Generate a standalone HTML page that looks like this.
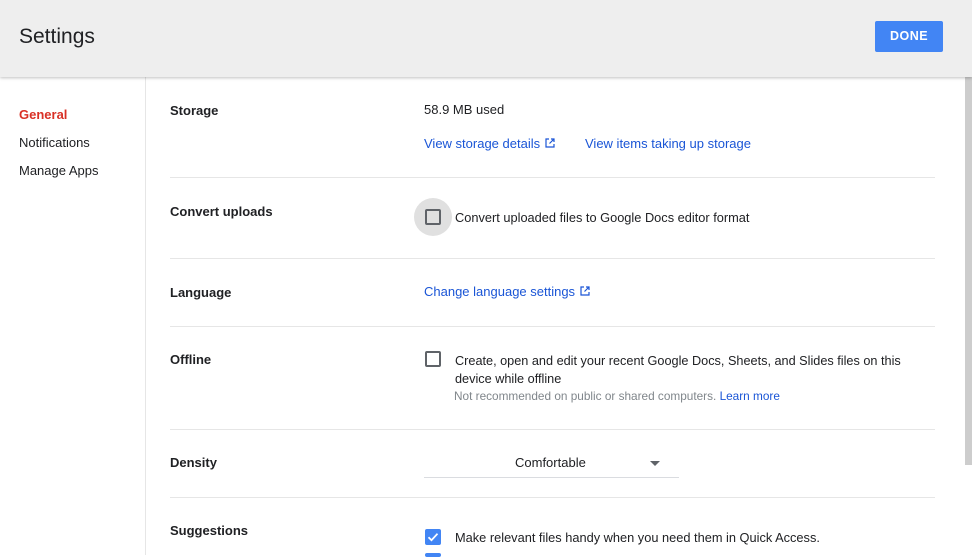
<!DOCTYPE html>
<html><head><style>
*{margin:0;padding:0;box-sizing:border-box}
body{width:972px;height:555px;overflow:hidden;background:#fff;font-family:"Liberation Sans",Arial,sans-serif;color:#202124;position:relative}
.a{position:absolute;white-space:nowrap}
.hdr{position:absolute;left:0;top:0;width:972px;height:77px;background:#eeeeee;box-shadow:0 1px 3px rgba(0,0,0,.25);z-index:2}
.lbl{font-size:13px;font-weight:bold;color:#202124}
.t{font-size:13px;color:#202124}
.lnk{font-size:13px;color:#1a55d6}
.hr{position:absolute;left:170px;width:765px;height:1px;background:#e6e6e6}
.cb{position:absolute;width:16px;height:16px;border:2px solid #5f6368;border-radius:2px}
.ext{display:inline-block;width:10px;height:10px;margin-left:5px;vertical-align:0}
</style></head><body>
<div class="hdr">
<div class="a" style="left:19px;top:25px;font-size:21px;color:#202124">Settings</div>
<div class="a" style="left:875px;top:21px;width:68px;height:31px;background:#4285f4;border-radius:2px;color:#fff;font-size:12.5px;font-weight:bold;text-align:center;line-height:31px;letter-spacing:.5px">DONE</div>
</div>
<div class="a" style="left:145px;top:77px;width:1px;height:478px;background:#e6e6e6"></div>
<div class="a" style="left:965px;top:73px;width:7px;height:392px;background:#cdcdcd"></div>
<div class="a" style="left:19px;top:107px;font-size:13px;font-weight:bold;color:#d93025">General</div>
<div class="a t" style="left:19px;top:135px">Notifications</div>
<div class="a t" style="left:19px;top:163px">Manage Apps</div>

<div class="a lbl" style="left:170px;top:103px">Storage</div>
<div class="a t" style="left:424px;top:102px">58.9 MB used</div>
<div class="a lnk" style="left:424px;top:136px">View storage details<svg class="ext" viewBox="0 0 10 10"><path d="M4 1H1v8h8V6M6 1h3v3M9 1L4.5 5.5" fill="none" stroke="#1a55d6" stroke-width="1.2"/></svg></div>
<div class="a lnk" style="left:585px;top:136px">View items taking up storage</div>
<div class="hr" style="top:177px"></div>

<div class="a lbl" style="left:170px;top:204px">Convert uploads</div>
<div class="a" style="left:414px;top:198px;width:38px;height:38px;border-radius:50%;background:#e0e0e0"></div>
<div class="cb" style="left:425px;top:209px"></div>
<div class="a t" style="left:455px;top:210px;font-size:12.8px">Convert uploaded files to Google Docs editor format</div>
<div class="hr" style="top:258px"></div>

<div class="a lbl" style="left:170px;top:285px">Language</div>
<div class="a lnk" style="left:424px;top:284px">Change language settings<svg class="ext" viewBox="0 0 10 10"><path d="M4 1H1v8h8V6M6 1h3v3M9 1L4.5 5.5" fill="none" stroke="#1a55d6" stroke-width="1.2"/></svg></div>
<div class="hr" style="top:326px"></div>

<div class="a lbl" style="left:170px;top:352px">Offline</div>
<div class="cb" style="left:425px;top:351px"></div>
<div class="a t" style="left:455px;top:352px;line-height:18px;font-size:12.7px">Create, open and edit your recent Google Docs, Sheets, and Slides files on this<br>device while offline</div>
<div class="a" style="left:454px;top:389px;font-size:11.8px;color:#80868b">Not recommended on public or shared computers. <span style="color:#1a55d6">Learn more</span></div>
<div class="hr" style="top:429px"></div>

<div class="a lbl" style="left:170px;top:455px">Density</div>
<div class="a t" style="left:515px;top:455px">Comfortable</div>
<div class="a" style="left:650px;top:461px;width:0;height:0;border-left:5px solid transparent;border-right:5px solid transparent;border-top:5px solid #5f6368"></div>
<div class="a" style="left:424px;top:477px;width:255px;height:1px;background:#dadce0"></div>
<div class="hr" style="top:497px"></div>

<div class="a lbl" style="left:170px;top:523px">Suggestions</div>
<div class="a" style="left:425px;top:529px;width:16px;height:16px;background:#4285f4;border-radius:2px"><svg width="16" height="16" viewBox="0 0 16 16"><path d="M3.5 8.2l3 3 6-6.5" fill="none" stroke="#fff" stroke-width="1.8"/></svg></div>
<div class="a t" style="left:455px;top:530px;font-size:12.8px">Make relevant files handy when you need them in Quick Access.</div>
<div class="a" style="left:425px;top:553px;width:16px;height:4px;background:#4285f4;border-radius:2px"></div>
</body></html>
